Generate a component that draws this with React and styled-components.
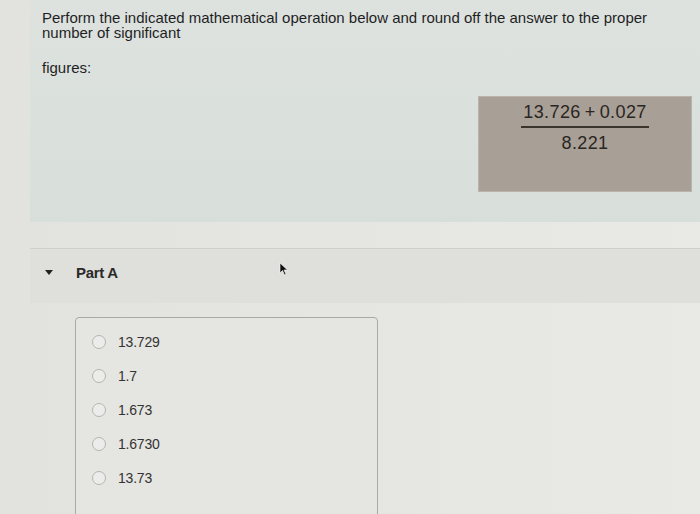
import styled, { createGlobalStyle } from "styled-components";

const Global = createGlobalStyle`
  html, body {
    margin: 0;
    padding: 0;
    background: #e4e4e0;
    font-family: "Liberation Sans", Arial, sans-serif;
    color: #222;
  }
`;

const Page = styled.div`
  width: 700px;
  height: 514px;
  overflow: hidden;
  background: linear-gradient(90deg, #e2e2de 0%, #e6e6e2 60%, #e9e9e6 100%);
`;

const Prompt = styled.section`
  margin-left: 30px;
  height: 222px;
  background: linear-gradient(180deg, #dde2df 0%, #d8dfdb 100%);
  padding: 10px 8px 0 12px;
  box-sizing: border-box;
  display: flex;
  flex-direction: column;
`;

const Text = styled.p`
  margin: 0;
  font-size: 15px;
  line-height: 15px;
  color: #1f1f1f;
  width: 630px;
  letter-spacing: 0;
`;

const Figures = styled(Text)`
  margin-top: 20px;
`;

const FormulaRow = styled.div`
  display: flex;
  justify-content: flex-end;
  margin-top: 21px;
`;

const FormulaBox = styled.div`
  width: 214px;
  height: 96px;
  background: #a89f96;
  border: 1px solid #b8b3ad;
  box-sizing: border-box;
  display: flex;
  justify-content: center;
  padding-top: 4px;
`;

const Fraction = styled.div`
  display: flex;
  flex-direction: column;
  align-items: center;
  font-family: "Liberation Sans", Arial, sans-serif;
  font-size: 18px;
  letter-spacing: 0.4px;
  color: #2a2622;
`;

const Numerator = styled.span`
  padding: 0 2px 3px;
  border-bottom: 2px solid #3a342e;
  line-height: 22px;
`;

const Denominator = styled.span`
  line-height: 22px;
  padding-top: 4px;
`;

const PartHeader = styled.div`
  margin-top: 26px;
  margin-left: 30px;
  height: 46px;
  border-top: 1px solid #cfcfcb;
  background: #dfdfdb;
  display: flex;
  align-items: center;
  padding-left: 15px;
  padding-bottom: 8px;
  position: relative;
`;

const Caret = styled.span`
  width: 0;
  height: 0;
  border-left: 4px solid transparent;
  border-right: 4px solid transparent;
  border-top: 5px solid #222;
  margin-right: 23px;
`;

const PartTitle = styled.span`
  font-size: 15px;
  font-weight: bold;
  color: #2a2a2a;
  letter-spacing: -0.3px;
`;

const Cursor = styled.svg`
  position: absolute;
  left: 249px;
  top: 13px;
`;

const Choices = styled.div`
  margin: 14px 0 0 75px;
  width: 303px;
  height: 220px;
  border: 1px solid #a9a9a5;
  border-radius: 4px;
  box-sizing: border-box;
  background: #e5e5e1;
  padding: 15px 0 0 16px;
  display: flex;
  flex-direction: column;
  gap: 16px;
`;

const Choice = styled.label`
  display: flex;
  align-items: center;
  height: 18px;
  font-size: 14px;
  color: #333;
  letter-spacing: -0.2px;
`;

const Radio = styled.span`
  width: 12px;
  height: 12px;
  border-radius: 50%;
  border: 1.5px solid #b4b4b0;
  background: #ececea;
  margin-right: 12px;
  flex-shrink: 0;
`;

const options = ["13.729", "1.7", "1.673", "1.6730", "13.73"];

export default function App() {
  return (
    <Page>
      <Global />
      <Prompt>
        <Text>
          Perform the indicated mathematical operation below and round off the answer to the proper
          number of significant
        </Text>
        <Figures>figures:</Figures>
        <FormulaRow>
          <FormulaBox>
            <Fraction>
              <Numerator>13.726{"\u2009"}+{"\u2009"}0.027</Numerator>
              <Denominator>8.221</Denominator>
            </Fraction>
          </FormulaBox>
        </FormulaRow>
      </Prompt>
      <PartHeader>
        <Caret />
        <PartTitle>Part A</PartTitle>
        <Cursor width="10" height="14" viewBox="0 0 10 14">
          <path d="M1 1 L1 11 L3.5 8.5 L5.5 13 L7 12.3 L5 8 L8.5 8 Z" fill="#111" stroke="#fff" strokeWidth="0.6" />
        </Cursor>
      </PartHeader>
      <Choices>
        {options.map((o) => (
          <Choice key={o}>
            <Radio />
            {o}
          </Choice>
        ))}
      </Choices>
    </Page>
  );
}
